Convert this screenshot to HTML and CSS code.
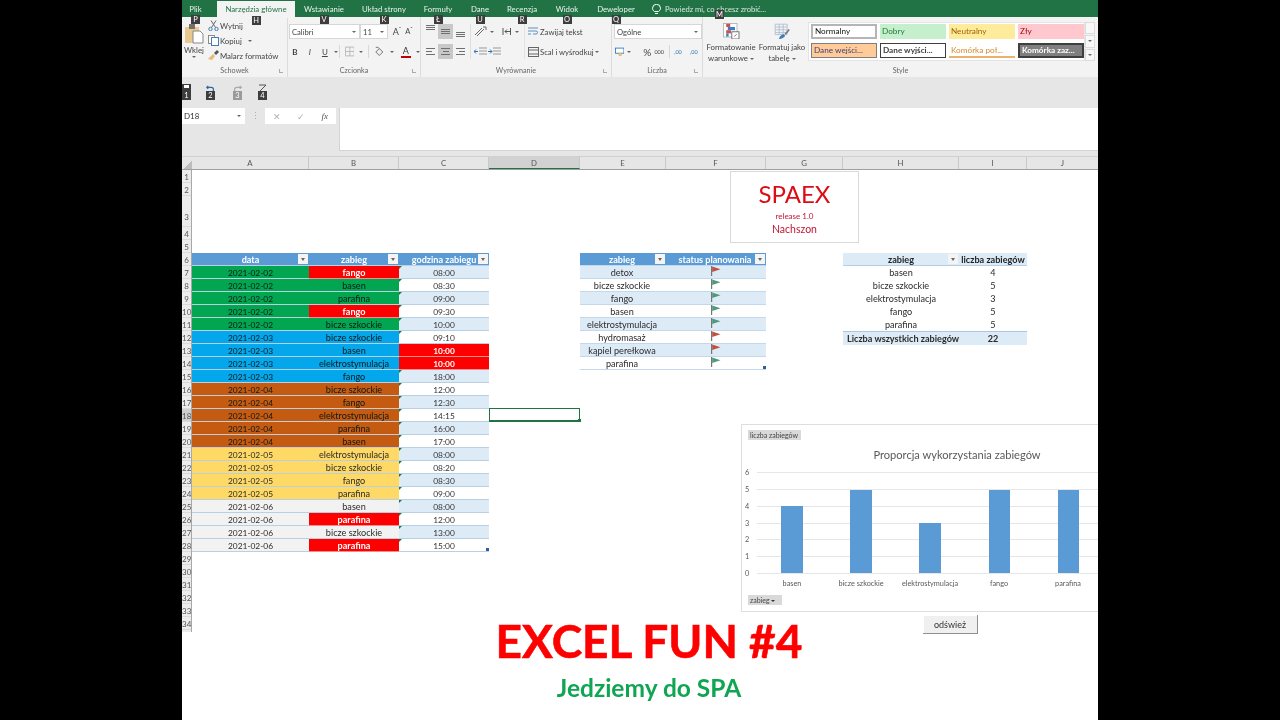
FILE: index.html
```html
<!DOCTYPE html>
<html lang="pl">
  <head>
    <meta charset="UTF-8" />
    <title>EXCEL FUN #4</title>
    <link rel="stylesheet" href="styles.css">
  </head>
  <body>
    <div class="app">
      <div class="tabs">
        <div class="tab">Plik<span class="key">P</span></div>
        <div class="tab active">Narzędzia główne<span class="key">H</span></div>
        <div class="tab">Wstawianie<span class="key">V</span></div>
        <div class="tab">Układ strony<span class="key">K</span></div>
        <div class="tab">Formuły<span class="key">Ł</span></div>
        <div class="tab">Dane<span class="key">U</span></div>
        <div class="tab">Recenzja<span class="key">R</span></div>
        <div class="tab">Widok<span class="key">O</span></div>
        <div class="tab">Deweloper<span class="key">Q</span></div>
        <div class="tell">
          <svg width="9" height="11" viewBox="0 0 9 11" fill="none" stroke="#fff"><path d="M2.5 7.5C1 6.5.5 5.300.5 4.300a4 4 0 0 1 8 0c0 1-.5 2.200-2 3.200zM3 9.500h3"/></svg>
          Powiedz mi, co chcesz zrobić...<span class="key key-m">M</span>
        </div>
      </div>

      <div class="ribbon">
        <section class="group clipboard">
          <div class="group-body">
            <div class="paste">
              <svg width="20" height="20" viewBox="0 0 20 20"><rect x="1" y="3" width="14" height="16" fill="#e8c98e"/><rect x="5" y="0" width="6" height="5" fill="#77706a"/><path d="M9 7h7l3 3v9H9z" fill="#fff" stroke="#888"/></svg>
              <span>Wklej</span>
              <i class="caret"></i>
            </div>
            <div class="clip-list">
              <div class="clip-item">
                <svg width="11" height="11" viewBox="0 0 11 11" fill="none" stroke="#3f7fb5"><circle cx="2.500" cy="9" r="1.700"/><circle cx="8.500" cy="9" r="1.700"/><path d="M3.500 7.500 8 .5M7.500 7.500 3 .5" stroke="#666"/></svg>
                Wytnij
              </div>
              <div class="clip-item">
                <svg width="11" height="11" viewBox="0 0 11 11" fill="#fff" stroke="#8a8a8a"><rect x=".5" y=".5" width="6" height="8"/><rect x="3.500" y="2.500" width="7" height="8" stroke="#3f7fb5"/></svg>
                Kopiuj <i class="caret copy-caret"></i>
              </div>
              <div class="clip-item">
                <svg width="11" height="11" viewBox="0 0 11 11"><path d="M0 9 5 4l2 2-3 4z" fill="#e3bd72"/><path d="M6 3 9 0l2 2-3 3z" fill="#555"/></svg>
                Malarz formatów
              </div>
            </div>
          </div>
          <div class="group-label">Schowek<i class="launcher"></i></div>
        </section>

        <section class="group font">
          <div class="group-body rows">
            <div class="tool-row">
              <div class="combo combo-font">Calibri<i class="caret"></i></div>
              <div class="combo combo-size">11<i class="caret"></i></div>
              <span class="grow-btn">A<sup>ˆ</sup></span>
              <span class="grow-btn small">A<sup>ˇ</sup></span>
            </div>
            <div class="tool-row font-tools">
              <b>B</b><em>I</em><u>U</u><i class="caret"></i>
              <span class="sep"></span>
              <svg width="11" height="11" viewBox="0 0 11 11" fill="none" stroke="#b5b5b5"><path d="M.5.5h10v10H.5zM5.500.5v10M.5 5.500h10"/></svg><i class="caret"></i>
              <span class="sep"></span>
              <svg width="12" height="12" viewBox="0 0 12 12"><path d="m2 6 4-4 4 4-4 4z" fill="#eee" stroke="#666"/><path d="M2 1c2-1 3 0 4 1" fill="none" stroke="#666"/></svg><i class="caret"></i>
              <span class="font-color">A</span><i class="caret"></i>
            </div>
          </div>
          <div class="group-label">Czcionka<i class="launcher"></i></div>
        </section>

        <section class="group align">
          <div class="group-body align-body">
            <div class="align-grid">
              <span class="lines top"></span>
              <span class="lines mid on"></span>
              <span class="lines bot"></span>
              <span class="lines left"></span>
              <span class="lines center on"></span>
              <span class="lines right"></span>
            </div>
            <div class="indent-grid">
              <div class="indent-cell wide">
                <svg width="13" height="11" viewBox="0 0 13 11" fill="none" stroke="#6a6a6a"><path d="m1 9 7-7M3 10l7-7M9 1h3v3" /></svg><i class="caret"></i>
              </div>
              <div class="indent-cell">
                <svg width="10" height="9" viewBox="0 0 10 9" fill="none" stroke="#555"><path d="M1 1v7M9 4.500H3M5 2.500l-2 2 2 2M8.500 1v7"/></svg><i class="caret"></i>
              </div>
              <div class="indent-cell">
                <svg width="13" height="10" viewBox="0 0 13 10" fill="none" stroke="#999"><path d="M5 1h8M5 4h8M5 7h8"/><path d="M4 4.500H0M2 2.500l-2 2 2 2" stroke="#2b75b5"/></svg>
              </div>
              <div class="indent-cell">
                <svg width="13" height="10" viewBox="0 0 13 10" fill="none" stroke="#999"><path d="M5 1h8M5 4h8M5 7h8"/><path d="M0 4.500h4M2 2.500l2 2-2 2" stroke="#2b75b5"/></svg>
              </div>
            </div>
            <div class="wrap-list">
              <div class="wrap-item">
                <svg width="11" height="10" viewBox="0 0 11 10" fill="none" stroke="#5b8fc0"><path d="M0 1h10M0 4h8a1.500 1.500 0 0 1 0 3H5M0 7h3"/></svg>
                Zawijaj tekst
              </div>
              <div class="wrap-item">
                <svg width="11" height="10" viewBox="0 0 11 10" fill="none" stroke="#666"><rect x=".5" y=".5" width="10" height="9"/><path d="M.5 3h10M.5 7h10"/></svg>
                Scal i wyśrodkuj <i class="caret"></i>
              </div>
            </div>
          </div>
          <div class="group-label">Wyrównanie<i class="launcher"></i></div>
        </section>

        <section class="group number">
          <div class="group-body rows">
            <div class="tool-row">
              <div class="combo combo-format">Ogólne<i class="caret"></i></div>
            </div>
            <div class="tool-row number-tools">
              <svg width="11" height="11" viewBox="0 0 11 11"><rect x=".5" y="1.500" width="10" height="6" fill="#fff" stroke="#2b75b5"/><circle cx="6" cy="9" r="2" fill="#e3bd72"/></svg><i class="caret"></i>
              <span class="percent">%</span><span class="thousands">000</span>
              <span class="sep"></span>
              <span class="decimals">,00</span><span class="decimals">,00</span>
            </div>
          </div>
          <div class="group-label">Liczba<i class="launcher"></i></div>
        </section>

        <section class="group styles">
          <div class="group-body styles-body">
            <div class="big-btn btn-format">
              <svg width="20" height="20" viewBox="0 0 20 20"><rect x="0.500" y="0.500" width="17" height="17" fill="#fff" stroke="#aaa"/><rect x="4" y="1" width="5" height="4" fill="#c9524f"/><rect x="6" y="5" width="9" height="4" fill="#3b7fc4"/><rect x="4" y="9" width="6" height="4" fill="#c9524f"/><rect x="4" y="13" width="3" height="4" fill="#3b7fc4"/><rect x="11" y="11" width="9" height="9" fill="#fff" stroke="#555"/><path d="m14 17 3-3" stroke="#555"/></svg>
              <span>Formatowanie<br>warunkowe <i class="caret"></i></span>
            </div>
            <div class="big-btn btn-table">
              <svg width="20" height="20" viewBox="0 0 20 20" fill="none"><path d="M1.500 1.500h15v13h-15zM1.500 5h15M1.500 8.500h15M1.500 12h15M6.500 1.500v13M11.500 1.500v13" stroke="#a9b9cc"/><path d="M6 20c1-4 4-6 6-6l2 2c-1 2-4 4-8 4z" fill="#3f7fb5"/><path d="m14 14 5-6" stroke="#777" stroke-width="2"/></svg>
              <span>Formatuj jako<br>tabelę <i class="caret"></i></span>
            </div>
            <div class="gallery">
              <div class="style-cell normal">Normalny</div>
              <div class="style-cell good">Dobry</div>
              <div class="style-cell neutral">Neutralny</div>
              <div class="style-cell bad">Zły</div>
              <div class="style-cell input">Dane wejści...</div>
              <div class="style-cell output">Dane wyjści...</div>
              <div class="style-cell linked">Komórka poł...</div>
              <div class="style-cell check">Komórka zaz...</div>
            </div>
            <div class="gallery-scroll">
              <span></span><span><i class="caret"></i></span><span><i class="caret"></i></span>
            </div>
          </div>
          <div class="group-label">Style</div>
        </section>
      </div>

      <div class="qat">
        <div class="qat-item">
          <svg width="9" height="9" viewBox="0 0 9 9"><rect width="9" height="9" fill="#3d3d3d"/><rect x="2" y="1" width="5" height="3" fill="#fff"/></svg>
          <span class="key">1</span>
        </div>
        <div class="qat-item">
          <svg width="12" height="9" viewBox="0 0 12 9" fill="none" stroke="#2b6aa8" stroke-width="1.500"><path d="M1 3h6a3 3 0 0 1 0 6M3 1 1 3l2 2"/></svg>
          <span class="key">2</span>
        </div>
        <div class="qat-item">
          <svg width="12" height="9" viewBox="0 0 12 9" fill="none" stroke="#aaa" stroke-width="1.500"><path d="M11 3H5a3 3 0 0 0 0 6M9 1l2 2-2 2"/></svg>
          <span class="key muted">3</span>
        </div>
        <div class="qat-item">
          <svg width="9" height="9" viewBox="0 0 9 9" fill="none" stroke="#555"><path d="M1 8 8 1M1 1h7"/></svg>
          <span class="key">4</span>
        </div>
      </div>

      <div class="formula-bar">
        <div class="name-box">D18<i class="caret"></i></div>
        <div class="dots">⋮</div>
        <div class="fx-box">
          <span>✕</span><span>✓</span><em>fx</em>
        </div>
        <div class="formula-input"></div>
      </div>

      <div class="col-heads">
        <div class="corner"></div>
        <div class="col col-a">A</div>
        <div class="col col-b">B</div>
        <div class="col col-c">C</div>
        <div class="col col-d current">D</div>
        <div class="col col-e">E</div>
        <div class="col col-f">F</div>
        <div class="col col-g">G</div>
        <div class="col col-h">H</div>
        <div class="col col-i">I</div>
        <div class="col col-j">J</div>
      </div>

      <div class="sheet">
        <div class="row-heads">
          <div>1</div><div>2</div><div class="tall">3</div><div>4</div><div>5</div><div>6</div><div>7</div><div>8</div><div>9</div><div>10</div>
          <div>11</div><div>12</div><div>13</div><div>14</div><div>15</div><div>16</div><div>17</div><div class="current">18</div><div>19</div><div>20</div>
          <div>21</div><div>22</div><div>23</div><div>24</div><div>25</div><div>26</div><div>27</div><div>28</div><div>29</div><div>30</div>
          <div>31</div><div>32</div><div>33</div><div>34</div>
        </div>

        <div class="cells">
          <div class="schedule">
            <div class="row head"><div>data<i class="filter"></i></div><div>zabieg<i class="filter"></i></div><div>godzina zabiegu<i class="filter"></i></div></div>
            <div class="row green"><div>2021-02-02</div><div class="alert">fango</div><div class="time">08:00</div></div>
            <div class="row green"><div>2021-02-02</div><div>basen</div><div class="time">08:30</div></div>
            <div class="row green"><div>2021-02-02</div><div>parafina</div><div class="time">09:00</div></div>
            <div class="row green"><div>2021-02-02</div><div class="alert">fango</div><div class="time">09:30</div></div>
            <div class="row green"><div>2021-02-02</div><div>bicze szkockie</div><div class="time">10:00</div></div>
            <div class="row blue"><div>2021-02-03</div><div>bicze szkockie</div><div class="time">09:10</div></div>
            <div class="row blue"><div>2021-02-03</div><div>basen</div><div class="alert">10:00</div></div>
            <div class="row blue"><div>2021-02-03</div><div>elektrostymulacja</div><div class="alert">10:00</div></div>
            <div class="row blue"><div>2021-02-03</div><div>fango</div><div class="time">18:00</div></div>
            <div class="row brown"><div>2021-02-04</div><div>bicze szkockie</div><div class="time">12:00</div></div>
            <div class="row brown"><div>2021-02-04</div><div>fango</div><div class="time">12:30</div></div>
            <div class="row brown"><div>2021-02-04</div><div>elektrostymulacja</div><div class="time">14:15</div></div>
            <div class="row brown"><div>2021-02-04</div><div>parafina</div><div class="time">16:00</div></div>
            <div class="row brown"><div>2021-02-04</div><div>basen</div><div class="time">17:00</div></div>
            <div class="row yellow"><div>2021-02-05</div><div>elektrostymulacja</div><div class="time">08:00</div></div>
            <div class="row yellow"><div>2021-02-05</div><div>bicze szkockie</div><div class="time">08:20</div></div>
            <div class="row yellow"><div>2021-02-05</div><div>fango</div><div class="time">08:30</div></div>
            <div class="row yellow"><div>2021-02-05</div><div>parafina</div><div class="time">09:00</div></div>
            <div class="row grey"><div>2021-02-06</div><div>basen</div><div class="time">08:00</div></div>
            <div class="row grey"><div>2021-02-06</div><div class="alert">parafina</div><div class="time">12:00</div></div>
            <div class="row grey"><div>2021-02-06</div><div>bicze szkockie</div><div class="time">13:00</div></div>
            <div class="row grey"><div>2021-02-06</div><div class="alert">parafina</div><div class="time">15:00</div></div>
            <i class="resize"></i>
          </div>

          <div class="plan">
            <div class="row head"><div>zabieg<i class="filter"></i></div><div>status planowania<i class="filter"></i></div></div>
            <div class="row"><div>detox</div><div><svg class="flag red"><use href="#flag"/></svg></div></div>
            <div class="row"><div>bicze szkockie</div><div><svg class="flag"><use href="#flag"/></svg></div></div>
            <div class="row"><div>fango</div><div><svg class="flag"><use href="#flag"/></svg></div></div>
            <div class="row"><div>basen</div><div><svg class="flag"><use href="#flag"/></svg></div></div>
            <div class="row"><div>elektrostymulacja</div><div><svg class="flag"><use href="#flag"/></svg></div></div>
            <div class="row"><div>hydromasaż</div><div><svg class="flag red"><use href="#flag"/></svg></div></div>
            <div class="row"><div>kąpiel perełkowa</div><div><svg class="flag red"><use href="#flag"/></svg></div></div>
            <div class="row"><div>parafina</div><div><svg class="flag"><use href="#flag"/></svg></div></div>
            <i class="resize"></i>
          </div>

          <div class="summary">
            <div class="row head"><div>zabieg<i class="filter plain"></i></div><div>liczba zabiegów</div></div>
            <div class="row"><div>basen</div><div>4</div></div>
            <div class="row"><div>bicze szkockie</div><div>5</div></div>
            <div class="row"><div>elektrostymulacja</div><div>3</div></div>
            <div class="row"><div>fango</div><div>5</div></div>
            <div class="row"><div>parafina</div><div>5</div></div>
            <div class="row total"><div>Liczba wszystkich zabiegów</div><div>22</div></div>
          </div>

          <div class="selected"></div>

          <div class="logo-box">
            <div class="logo-name">SPAEX</div>
            <div class="logo-release">release 1.0</div>
            <div class="logo-author">Nachszon</div>
          </div>

          <div class="chart">
            <svg width="357" height="188" viewBox="0 0 357 188">
              <g stroke="#e6e6e6">
                <path d="M16 48.500h341M16 65.500h341M16 82.500h341M16 99.500h341M16 115.500h341M16 132.500h341M16 149.500h341"/>
              </g>
              <g fill="#5b9bd5">
                <rect x="40" y="82" width="22" height="67"/>
                <rect x="109" y="66" width="22" height="83"/>
                <rect x="178" y="99" width="22" height="50"/>
                <rect x="248" y="66" width="21" height="83"/>
                <rect x="317" y="66" width="21" height="83"/>
              </g>
              <text class="chart-title" x="216" y="35" text-anchor="middle">Proporcja wykorzystania zabiegów</text>
              <g class="chart-axis" text-anchor="middle">
                <text x="6" y="51">6</text>
                <text x="6" y="68">5</text>
                <text x="6" y="85">4</text>
                <text x="6" y="102">3</text>
                <text x="6" y="118">2</text>
                <text x="6" y="135">1</text>
                <text x="6" y="152">0</text>
                <text x="51" y="162">basen</text>
                <text x="120" y="162">bicze szkockie</text>
                <text x="189" y="162">elektrostymulacja</text>
                <text x="258" y="162">fango</text>
                <text x="327" y="162">parafina</text>
              </g>
            </svg>
            <div class="pivot pivot-value">liczba zabiegów</div>
            <div class="pivot pivot-axis">zabieg <i class="caret dark"></i></div>
          </div>

          <button class="refresh">odśwież</button>
        </div>
      </div>

      <div class="caption">
        <h1>EXCEL FUN #4</h1>
        <h2>Jedziemy do SPA</h2>
      </div>
    </div>

    <svg class="defs" width="0" height="0">
      <symbol id="flag" viewBox="0 0 10 10">
        <rect x="0" y="0" width="1.200" height="10" fill="#777"/>
        <path d="M1.200 .5 9.500 3.300 1.200 6z"/>
      </symbol>
    </svg>
  </body>
</html>
```

FILE: styles.css
```css
* {
  box-sizing: border-box;
}

body {
  margin: 0;
  height: 720px;
  overflow: hidden;
  background: #000;
  font-family: Lato, "Liberation Sans", sans-serif;
  color: #333;
}

.app {
  position: relative;
  width: 916px;
  height: 720px;
  margin: 0 auto;
  background: #fff;
  overflow: hidden;
  filter: blur(0.3px);
}

i {
  font-style: normal;
}

.caret {
  display: inline-block;
  width: 0;
  height: 0;
  border-left: 2px solid transparent;
  border-right: 2px solid transparent;
  border-top: 2px solid #666;
  vertical-align: middle;
}

.caret.dark {
  border-top-color: #333;
}

.copy-caret {
  margin-left: 5px;
}

.key {
  position: absolute;
  z-index: 5;
  top: 15px;
  left: 50%;
  width: 9px;
  height: 9px;
  margin-left: -4.500px;
  background: #3d3d3d;
  color: #fff;
  font-size: 7.500px;
  line-height: 9px;
  text-align: center;
}

.key.muted {
  background: #9a9a9a;
}

/* tabs */
.tabs {
  display: grid;
  grid-template-columns: 27px 86px 58px 62px 46px 38px 46px 44px 54px 1fr;
  height: 17px;
  background: #217346;
  color: #e9f3ed;
  font-size: 7.800px;
  line-height: 18px;
}

.tab {
  position: relative;
  text-align: center;
  white-space: nowrap;
}

.tab.active {
  margin: 1px 0 0 8px;
  background: #f3f3f3;
  color: #217346;
  line-height: 16px;
}

.tell {
  position: relative;
  display: flex;
  align-items: center;
  gap: 4px;
  padding-left: 9px;
  color: #d7e6dd;
  font-size: 7.600px;
}

.key-m {
  top: 10px;
  left: 72px;
  margin: 0;
}

/* ribbon */
.ribbon {
  display: flex;
  height: 60px;
  background: #f3f3f3;
  font-size: 7.800px;
  color: #444;
}

.group {
  display: flex;
  flex-direction: column;
  border-right: 1px solid #dcdcdc;
}

.group-body {
  flex: 1;
  min-height: 0;
}

.group-label {
  position: relative;
  height: 13px;
  color: #666;
  font-size: 7.200px;
  line-height: 14px;
  text-align: center;
}

.launcher {
  position: absolute;
  right: 4px;
  top: 5px;
  width: 4px;
  height: 4px;
  border-left: 1px solid #aaa;
  border-bottom: 1px solid #aaa;
}

.clipboard {
  width: 106px;
}

.clipboard .group-body {
  display: flex;
  padding-top: 3px;
}

.paste {
  display: flex;
  flex-direction: column;
  align-items: center;
  width: 24px;
  padding-top: 4px;
  line-height: 11px;
}

.paste svg {
  margin-bottom: 1px;
}

.clip-list {
  display: flex;
  flex-direction: column;
  gap: 4px;
  padding-left: 2px;
}

.clip-item {
  display: flex;
  align-items: center;
  gap: 1px;
  height: 11px;
  white-space: nowrap;
}

.font {
  width: 133px;
}

.rows {
  display: flex;
  flex-direction: column;
  gap: 5px;
  padding-top: 7px;
}

.tool-row {
  display: flex;
  align-items: center;
  height: 15px;
}

.font .tool-row {
  padding-left: 1px;
}

.combo {
  display: flex;
  align-items: center;
  justify-content: space-between;
  height: 15px;
  padding: 0 3px 0 2px;
  background: #fff;
  border: 1px solid #d6d6d6;
  font-size: 7.600px;
}

.combo-font {
  width: 71px;
}

.combo-size {
  width: 28px;
  margin-right: 3px;
}

.combo-format {
  width: 88px;
  margin-left: 2px;
}

.grow-btn {
  width: 12px;
  font-size: 9px;
  text-align: center;
  white-space: nowrap;
}

.grow-btn.small {
  font-size: 7.500px;
}

.grow-btn sup {
  font-size: 6px;
  line-height: 0;
}

.font .font-tools {
  gap: 5px;
  padding-left: 3px;
  font-size: 8px;
}

.font-tools b,
.font-tools em,
.font-tools u {
  width: 9px;
  text-align: center;
}

.font-tools b,
.font-tools em {
  margin-right: 2px;
}

.font-tools u + .caret + .sep {
  margin-left: -4px;
}

.sep {
  width: 1px;
  height: 13px;
  background: #d8d8d8;
}

.font-color {
  margin-left: 2px;
  padding: 0 2px;
  border-bottom: 2px solid #c00000;
  color: #333;
  font-size: 9px;
  line-height: 10px;
}

.align {
  width: 191px;
}

.align-body {
  display: flex;
  padding-top: 7px;
}

.align-grid {
  display: grid;
  grid-template-columns: repeat(3, 15px);
  grid-auto-rows: 15px;
  row-gap: 5px;
  padding-left: 2px;
  padding-right: 2px;
  border-right: 1px solid #dedede;
  height: 35px;
}

.lines {
  display: block;
  background-repeat: no-repeat;
  background-image: linear-gradient(#6f6f6f, #6f6f6f), linear-gradient(#6f6f6f, #6f6f6f), linear-gradient(#6f6f6f, #6f6f6f);
}

.lines.on {
  background-color: #c8c8c8;
}

.lines.top {
  background-size: 9px 1px;
  background-position: 3px 1px, 3px 3px, 3px 5px;
}

.lines.mid {
  background-size: 9px 1px;
  background-position: 3px 5px, 3px 7px, 3px 9px;
}

.lines.bot {
  background-size: 9px 1px;
  background-position: 3px 8px, 3px 10px, 3px 12px;
}

.lines.left {
  background-size: 9px 1px, 6px 1px, 9px 1px;
  background-position: 3px 4px, 3px 7px, 3px 10px;
}

.lines.center {
  background-size: 9px 1px, 6px 1px, 9px 1px;
  background-position: 3px 4px, 5px 7px, 3px 10px;
}

.lines.right {
  background-size: 9px 1px, 6px 1px, 9px 1px;
  background-position: 3px 4px, 6px 7px, 3px 10px;
}

.indent-grid {
  display: grid;
  grid-template-columns: 14px 14px 1fr;
  grid-auto-rows: 15px;
  row-gap: 5px;
  width: 54px;
  height: 35px;
  padding-left: 3px;
  border-right: 1px solid #e2e2e2;
}

.indent-cell {
  display: flex;
  align-items: center;
  gap: 3px;
}

.indent-cell.wide {
  grid-column: span 2;
}

.wrap-list {
  display: flex;
  flex-direction: column;
  gap: 5px;
  padding-left: 3px;
}

.wrap-item {
  display: flex;
  align-items: center;
  gap: 1px;
  height: 15px;
  white-space: nowrap;
  font-size: 7.700px;
}

.number {
  width: 91px;
}

.number-tools {
  gap: 3px;
  padding-left: 3px;
  font-size: 9px;
}

.percent {
  margin-left: 9px;
  font-size: 10px;
}

.thousands {
  font-size: 5.500px;
  width: 14px;
}

.decimals {
  width: 14px;
  font-size: 5.500px;
  color: #2b75b5;
  margin-left: 1px;
}

.styles {
  flex: 1;
  border-right: 0;
}

.styles-body {
  display: flex;
  padding-top: 5px;
}

.big-btn {
  display: flex;
  flex-direction: column;
  align-items: center;
  padding-top: 1px;
  line-height: 11px;
  text-align: center;
  white-space: nowrap;
  font-size: 7.800px;
}

.btn-format {
  width: 56px;
}

.btn-table {
  width: 46px;
}

.big-btn svg {
  margin-bottom: 3px;
}

.gallery {
  display: grid;
  grid-template-columns: repeat(4, 66px);
  grid-template-rows: 15px 15px;
  column-gap: 3px;
  row-gap: 4px;
  width: 277px;
  height: 39px;
  margin-left: 3px;
  padding: 1px 2px;
  background: #fff;
  border: 1px solid #e4e4e4;
}

.style-cell {
  padding-left: 2px;
  font-size: 8.200px;
  line-height: 14px;
  white-space: nowrap;
  overflow: hidden;
}

.normal {
  border: 2px solid #b5b5b5;
  line-height: 11px;
  color: #111;
}

.good {
  background: #c6efce;
  color: #1f7a35;
}

.neutral {
  background: #ffeb9c;
  color: #9c6500;
}

.bad {
  background: #ffc7ce;
  color: #9c0006;
}

.input {
  background: #ffcc99;
  border: 1px solid #7f7f7f;
  color: #3f3f76;
  line-height: 13px;
}

.output {
  background: #fff;
  border: 1px solid #3f3f3f;
  color: #3f3f3f;
  font-weight: 700;
  line-height: 13px;
}

.linked {
  border-bottom: 2px solid #e9b36f;
  color: #d68a2f;
}

.check {
  background: #7f7f7f;
  border: 2px solid #3f3f3f;
  color: #fff;
  font-weight: 700;
  line-height: 11px;
}

.gallery-scroll {
  display: flex;
  flex-direction: column;
  gap: 1px;
  width: 10px;
  height: 39px;
}

.gallery-scroll span {
  display: flex;
  align-items: center;
  justify-content: center;
  flex: 1;
  background: #f8f8f8;
  border: 1px solid #dcdcdc;
}

/* quick access and formula bar */
.qat {
  display: flex;
  height: 31px;
  background: #e6e6e6;
}

.qat-item {
  position: relative;
  display: flex;
  justify-content: center;
  width: 9px;
  padding-top: 7px;
  margin-right: 15px;
}

.qat-item:nth-child(2) {
  margin-right: 18px;
}

.qat-item:nth-child(3) {
  margin-right: 16px;
}

.qat-item .key {
  top: 14px;
}

.formula-bar {
  display: flex;
  align-items: flex-start;
  height: 49px;
  background: #e6e6e6;
}

.name-box {
  display: flex;
  align-items: center;
  justify-content: space-between;
  width: 63px;
  height: 16px;
  padding: 0 4px 0 2px;
  background: #fff;
  font-size: 8px;
}

.dots {
  width: 20px;
  color: #aaa;
  font-size: 9px;
  line-height: 16px;
  text-align: center;
}

.fx-box {
  display: flex;
  align-items: center;
  justify-content: space-around;
  width: 71px;
  height: 16px;
  margin-right: 3px;
  background: #fff;
  color: #b0b0b0;
  font-size: 9px;
}

.fx-box em {
  color: #555;
  font-family: "Liberation Serif", serif;
}

.formula-input {
  flex: 1;
  height: 43px;
  background: #fff;
  border-bottom: 1px solid #d4d4d4;
  border-left: 1px solid #d4d4d4;
}

/* sheet */
.col-heads {
  display: flex;
  height: 14px;
  margin-top: -1px;
  background: #e6e6e6;
  border-top: 1px solid #d0d0d0;
  border-bottom: 1px solid #9f9f9f;
  font-size: 7.800px;
  line-height: 12px;
  text-align: center;
  color: #555;
}

.corner {
  width: 10px;
  background: linear-gradient(135deg, transparent 60%, #bdbdbd 60%);
}

.col {
  border-right: 1px solid #c8c8c8;
}

.col.current {
  background: #d2d2d2;
  border-bottom: 1px solid #217346;
}

.col-a { width: 117px; }
.col-b { width: 90px; }
.col-c { width: 90px; }
.col-d { width: 91px; }
.col-e { width: 86px; }
.col-f { width: 100px; }
.col-g { width: 77px; }
.col-h { width: 116px; }
.col-i { width: 68px; }
.col-j { width: 71px; border-right: 0; }

.sheet {
  display: flex;
  height: 463px;
}

.row-heads {
  width: 10px;
  height: 462px;
  background: #ececec;
  border-right: 1px solid #a8a8a8;
  font-size: 8px;
  color: #555;
}

.row-heads div {
  height: 13px;
  padding-right: 2px;
  line-height: 14px;
  text-align: right;
  border-bottom: 1px solid #dadada;
  white-space: nowrap;
}

.row-heads .tall {
  height: 31px;
  line-height: 42px;
}

.row-heads .current {
  background: #cfcfcf;
}

.cells {
  position: relative;
  flex: 1;
  display: grid;
  grid-template-columns: 117px 90px 90px 91px 86px 100px 77px 116px 68px 71px;
  grid-template-rows: 13px 13px 31px 13px 13px repeat(29, 13px);
  font-size: 9.100px;
  color: #2b2b2b;
}

.row {
  display: grid;
  height: 13px;
  line-height: 14px;
  text-align: center;
  white-space: nowrap;
}

.row > div {
  position: relative;
  height: 13px;
}

.head {
  background: #5b9bd5;
  color: #fff;
  font-weight: 700;
}

.filter {
  position: absolute;
  right: 1px;
  top: 1px;
  width: 10px;
  height: 10px;
  background: #f4f4f4;
}

.filter::after {
  content: "";
  position: absolute;
  left: 3px;
  top: 4px;
  border-left: 2px solid transparent;
  border-right: 2px solid transparent;
  border-top: 3px solid #666;
}

.resize {
  position: absolute;
  right: 0;
  bottom: 1px;
  width: 3px;
  height: 3px;
  background: #2f5f97;
}

/* first table */
.schedule {
  position: relative;
  grid-column: 1 / span 3;
  grid-row: 6 / span 23;
}

.schedule .row {
  grid-template-columns: 117px 90px 90px;
}

.schedule .row > div {
  border-bottom: 1px solid #b9cfe4;
}

.schedule .row:not(.head) > div:first-child,
.schedule .row:not(.head) > div:last-child {
  font-size: 8.400px;
}

.green { background: #02a651; }
.blue { background: #04a6ec; }
.brown { background: #c55a11; }
.yellow { background: #ffd966; }
.grey { background: #f2f2f2; }

.green > div,
.blue > div,
.brown > div {
  color: #0c1a16;
}

.schedule .row > .alert {
  background: #fe0000;
  color: #fff;
  font-weight: 700;
  border-bottom-color: #ef8f8f;
}

.schedule .row > .time {
  background: #fff;
  color: #333;
}

.schedule .row:nth-child(even) > .time {
  background: #ddebf7;
}

.time::before {
  content: "";
  position: absolute;
  left: 0;
  top: 0;
  border-top: 3px solid #1d7a3c;
  border-right: 3px solid transparent;
}

/* second table */
.plan {
  position: relative;
  grid-column: 5 / span 2;
  grid-row: 6 / span 9;
}

.plan .row {
  grid-template-columns: 86px 100px;
  border-bottom: 1px solid #c3d8ec;
}

.plan .row > div:first-child {
  padding-right: 2px;
}

.plan .row:nth-child(even) {
  background: #ddebf7;
}

.plan .head:nth-child(n) {
  background: #5b9bd5;
}

.plan .head > div:last-child {
  padding-right: 2px;
}

.plan .row:not(.head) > div:last-child {
  padding: 0 0 0 45px;
  text-align: left;
}

.flag {
  display: block;
  width: 10px;
  height: 10px;
  fill: #4f9a78;
}

.flag.red {
  fill: #c0503f;
}

/* pivot summary */
.summary {
  grid-column: 8 / span 2;
  grid-row: 6 / span 7;
}

.summary .row {
  grid-template-columns: 116px 68px;
}

.summary .head {
  background: #ddebf7;
  border-bottom: 1px solid #b4cfe8;
  color: #222;
}

.total {
  height: 14px;
  background: #ddebf7;
  border-top: 1px solid #a9c7e3;
  font-weight: 700;
}

.total > div:first-child {
  text-align: left;
  padding-left: 4px;
}

.selected {
  position: relative;
  grid-column: 4;
  grid-row: 18;
  margin-top: -1px;
  border: 1px solid #217346;
  border-bottom-width: 2px;
}

.selected::after {
  content: "";
  position: absolute;
  right: -2px;
  bottom: -2px;
  width: 3px;
  height: 3px;
  background: #217346;
}

/* floating objects */
.logo-box {
  position: absolute;
  left: 538px;
  top: 1px;
  width: 129px;
  height: 72px;
  padding-top: 7px;
  background: #fff;
  border: 1px solid #d9d9d9;
  text-align: center;
}

.logo-name {
  color: #dd0b14;
  font-size: 24px;
  line-height: 30px;
}

.logo-release {
  margin-top: 2px;
  color: #c21432;
  font-size: 8px;
  line-height: 11px;
}

.logo-author {
  color: #c21432;
  font-size: 10.500px;
  line-height: 15px;
}

.chart {
  position: absolute;
  left: 549px;
  top: 254px;
  width: 357px;
  height: 188px;
  background: #fff;
  border: 1px solid #dedede;
  border-right: 0;
}

.chart svg {
  display: block;
  margin: -1px 0 0 -1px;
}

.chart-title {
  fill: #595959;
  font-size: 11.100px;
}

.chart-axis {
  fill: #595959;
  font-size: 7.300px;
}

.pivot {
  position: absolute;
  left: 6px;
  height: 10px;
  padding: 0 2px;
  background: #d9d9d9;
  color: #444;
  font-size: 7px;
  line-height: 10px;
  white-space: nowrap;
}

.pivot-value {
  top: 5px;
  width: 53px;
}

.pivot-axis {
  top: 170px;
  width: 34px;
}

.refresh {
  position: absolute;
  left: 731px;
  top: 445px;
  width: 55px;
  height: 19px;
  padding: 0;
  background: #f0f0f0;
  border: 0;
  border-right: 1px solid #8f8f8f;
  border-bottom: 1px solid #8f8f8f;
  box-shadow: inset 1px 1px 0 #fff;
  color: #333;
  font-family: Lato, sans-serif;
  font-size: 9px;
}

.caption {
  position: absolute;
  left: 200px;
  top: 616px;
  width: 534px;
  text-align: center;
  font-weight: 700;
}

.caption h1 {
  margin: 0;
  color: #fe0000;
  font-size: 46px;
  line-height: 50px;
  -webkit-text-stroke: 0.6px #fe0000;
}

.caption h2 {
  margin: 8px 0 0;
  color: #0fa552;
  font-size: 24.500px;
  line-height: 28px;
}

.defs {
  position: absolute;
}
```
